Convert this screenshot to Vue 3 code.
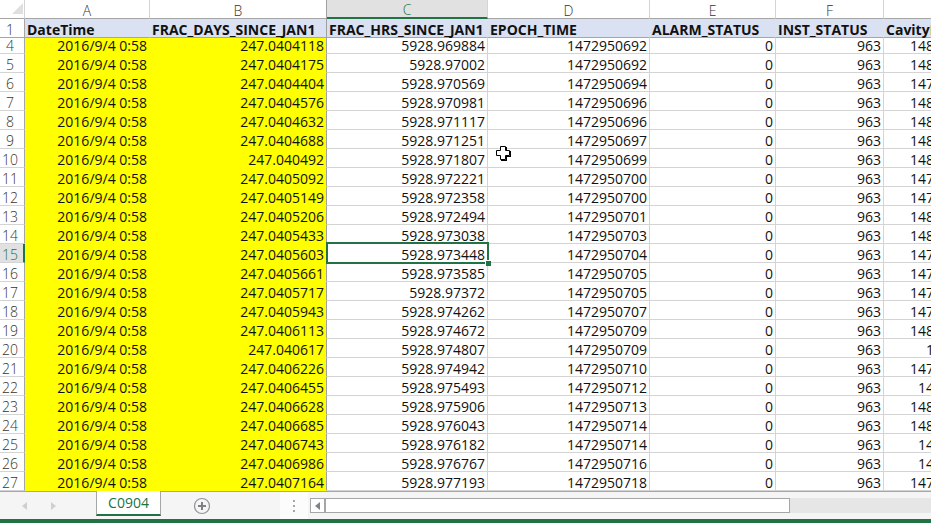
<template>
  <div class="workbook">
    <table class="grid">
      <colgroup>
        <col class="col-index" />
        <col v-for="column in columns" :key="column.letter" :class="'col-' + column.letter.toLowerCase()" />
      </colgroup>
      <thead>
        <tr class="letters">
          <th class="corner">
            <svg width="12" height="12" viewBox="0 0 12 12">
              <path d="M11 0V11H0Z" fill="#dfdfdf" />
            </svg>
          </th>
          <th
            v-for="column in columns"
            :key="column.letter"
            scope="col"
            :class="{ selected: column.letter === active.letter, frozen: column.letter === 'B' }"
          >
            {{ column.letter }}
          </th>
        </tr>
        <tr class="titles">
          <th class="index" scope="row">1</th>
          <th
            v-for="column in columns"
            :key="column.letter"
            scope="col"
            :class="{ frozen: column.letter === 'B' }"
          >
            {{ column.title }}
          </th>
        </tr>
      </thead>
      <tbody>
        <tr v-for="row in rows" :key="row.index" :class="{ first: row.index === 4 }">
          <th class="index" scope="row" :class="{ selected: row.index === active.row }">{{ row.index }}</th>
          <td
            v-for="(value, i) in row.cells"
            :key="i"
            :class="{ marked: i < 2, frozen: i === 1, active: isActive(row.index, i) }"
          >
            {{ value }}<span v-if="isActive(row.index, i)" class="handle"></span>
          </td>
        </tr>
      </tbody>
    </table>

    <div class="sheet-bar">
      <div class="sheets">
        <div class="sheet-nav">
          <button type="button" aria-label="Previous sheet">
            <svg width="5" height="8" viewBox="0 0 5 8"><path d="M5 0V8L0 4Z" fill="#cfcfcf" /></svg>
          </button>
          <button type="button" aria-label="Next sheet">
            <svg width="5" height="8" viewBox="0 0 5 8"><path d="M0 0V8L5 4Z" fill="#cfcfcf" /></svg>
          </button>
        </div>
        <button type="button" class="tab">C0904</button>
        <button type="button" class="new-sheet" aria-label="New sheet">
          <svg width="18" height="18" viewBox="0 0 18 18">
            <circle cx="9" cy="9" r="7.5" fill="none" stroke="#8f9498" stroke-width="1.2" />
            <path d="M9 5V13M5 9H13" stroke="#7c8285" stroke-width="2" />
          </svg>
        </button>
        <span class="dots"><i></i><i></i><i></i></span>
      </div>
      <div class="scrollbar">
        <button type="button" class="arrow" aria-label="Scroll left">
          <svg width="5" height="8" viewBox="0 0 5 8"><path d="M5 0V8L0 4Z" fill="#7d858c" /></svg>
        </button>
        <div class="track">
          <div class="thumb"></div>
        </div>
      </div>
    </div>
    <div class="status"></div>

    <svg class="pointer" width="17" height="17" viewBox="0 0 17 17">
      <path d="M11 2H12V6H16V12H12V16H6V15H11V11H15V6H11Z" fill="#000" />
      <path d="M5.500 1.500H10.500V5.500H14.500V10.500H10.500V14.500H5.500V10.500H1.500V5.500H5.500Z" fill="#fff" stroke="#000" stroke-width="1" />
    </svg>
  </div>
</template>

<script setup>
const columns = [
  { letter: 'A', title: 'DateTime' },
  { letter: 'B', title: 'FRAC_DAYS_SINCE_JAN1' },
  { letter: 'C', title: 'FRAC_HRS_SINCE_JAN1' },
  { letter: 'D', title: 'EPOCH_TIME' },
  { letter: 'E', title: 'ALARM_STATUS' },
  { letter: 'F', title: 'INST_STATUS' },
  { letter: 'G', title: 'CavityPressure' }
];

const active = { letter: 'C', row: 15 };

const readings = [
  ['247.0404118', '5928.969884', '1472950692', '148'],
  ['247.0404175', '5928.97002', '1472950692', '148'],
  ['247.0404404', '5928.970569', '1472950694', '147'],
  ['247.0404576', '5928.970981', '1472950696', '148'],
  ['247.0404632', '5928.971117', '1472950696', '148'],
  ['247.0404688', '5928.971251', '1472950697', '148'],
  ['247.040492', '5928.971807', '1472950699', '148'],
  ['247.0405092', '5928.972221', '1472950700', '147'],
  ['247.0405149', '5928.972358', '1472950700', '147'],
  ['247.0405206', '5928.972494', '1472950701', '148'],
  ['247.0405433', '5928.973038', '1472950703', '148'],
  ['247.0405603', '5928.973448', '1472950704', '147'],
  ['247.0405661', '5928.973585', '1472950705', '147'],
  ['247.0405717', '5928.97372', '1472950705', '147'],
  ['247.0405943', '5928.974262', '1472950707', '147'],
  ['247.0406113', '5928.974672', '1472950709', '148'],
  ['247.040617', '5928.974807', '1472950709', '1'],
  ['247.0406226', '5928.974942', '1472950710', '147'],
  ['247.0406455', '5928.975493', '1472950712', '14'],
  ['247.0406628', '5928.975906', '1472950713', '148'],
  ['247.0406685', '5928.976043', '1472950714', '148'],
  ['247.0406743', '5928.976182', '1472950714', '14'],
  ['247.0406986', '5928.976767', '1472950716', '14'],
  ['247.0407164', '5928.977193', '1472950718', '147']
];

const rows = readings.map(([days, hours, epoch, pressure], i) => ({
  index: i + 4,
  cells: ['2016/9/4 0:58', days, hours, epoch, '0', '963', pressure]
}));

const isActive = (index, i) => index === active.row && columns[i].letter === active.letter;
</script>

<style>
body {
  background: #f5f5f5;
}
</style>

<style scoped>
.workbook {
  position: relative;
  overflow: hidden;
  font-family: "Open Sans", "Noto Sans", sans-serif;
  font-size: 14px;
  font-weight: 400;
  color: #111;
}

/* the last column runs past the window edge */
.grid {
  width: calc(100% + 86px);
  table-layout: fixed;
  border-collapse: separate;
  border-spacing: 0;
  background: #fff;
}

.col-index {
  width: 25px;
}

.col-a {
  width: 125px;
}

.col-b {
  width: 177px;
}

.col-c {
  width: 161px;
}

.col-d {
  width: 162px;
}

.col-e {
  width: 126px;
}

.col-f {
  width: 108px;
}

.grid th,
.grid td {
  box-sizing: border-box;
  height: 19px;
  padding: 0 2px;
  border-right: 1px solid #d4d4d4;
  border-bottom: 1px solid #d4d4d4;
  line-height: 15px;
  white-space: nowrap;
  vertical-align: bottom;
}

.grid td {
  text-align: right;
}

.grid td:last-child {
  padding-right: 82px;
}

.grid .letters th {
  padding: 0;
  border-bottom-color: #a6a6a6;
  font-weight: 300;
  color: #333;
  text-align: center;
}

.grid .letters .corner {
  line-height: 0;
  text-align: right;
  vertical-align: middle;
}

.grid .letters .selected {
  border-bottom: 2px solid #217346;
  background: #e1e1e1;
  color: #217346;
}

.grid .titles th {
  border-right-color: #d9e1f2;
  border-bottom-color: #a6a6a6;
  background: #d9e1f2;
  font-weight: 700;
  text-align: left;
}

.grid .index,
.grid .titles .index {
  padding: 0 4px 0 0;
  border-right-color: #a6a6a6;
  background: #fff;
  font-weight: 300;
  color: #333;
  text-align: center;
}

.grid .index.selected {
  padding-right: 3px;
  border-right: 2px solid #217346;
  background: #e1e1e1;
  color: #217346;
}

/* scrolled half under the frozen title row */
.grid .first th,
.grid .first td {
  height: 16px;
}

.grid .marked {
  border-color: #ff0;
  background: #ff0;
}

.grid .frozen,
.grid .titles .frozen {
  border-right-color: #a0a0a0;
}

.active {
  position: relative;
}

.active::after {
  content: "";
  position: absolute;
  inset: -2px -2px -2px -1px;
  border: 2px solid #217346;
}

.handle {
  position: absolute;
  right: -4px;
  bottom: -4px;
  z-index: 1;
  width: 5px;
  height: 5px;
  border: solid #fff;
  border-width: 1px 0 0 1px;
  background: #217346;
}

.sheet-bar {
  display: flex;
  height: 28px;
  box-sizing: border-box;
  border-top: 1px solid #a6a6a6;
  background: #f5f5f5;
}

.sheets {
  display: flex;
  flex: 0 0 308px;
  align-items: center;
}

.sheet-bar button {
  padding: 0;
  border: 0;
  background: none;
  font: inherit;
  line-height: 0;
}

.sheet-nav {
  display: flex;
  flex: 0 0 96px;
  justify-content: center;
  gap: 24px;
  box-sizing: border-box;
  padding-right: 18px;
}

.sheet-bar .tab {
  align-self: flex-start;
  width: 65px;
  height: 25px;
  margin-top: -1px;
  border: solid #a6a6a6;
  border-width: 0 1px;
  border-bottom: 2px solid #217346;
  background: #fff;
  line-height: 22px;
  color: #217346;
}

.new-sheet {
  margin-left: 32px;
}

.dots {
  display: flex;
  flex-direction: column;
  align-items: center;
  justify-content: center;
  gap: 3px;
  width: 28px;
  height: 100%;
  margin-left: auto;
  background: #fcfcfc;
}

.dots i {
  width: 2px;
  height: 2px;
  background: #a6a6a6;
}

.scrollbar {
  display: flex;
  flex: 1;
  height: 15px;
  margin: 6px 0 0 2px;
}

.sheet-bar .arrow {
  box-sizing: border-box;
  width: 15px;
  border: 1px solid #a6a6a6;
  background: #fff;
}

.track {
  display: grid;
  flex: 1;
  grid-template-columns: 465fr 141fr;
  background: #e6e6e6;
}

.thumb {
  border: 1px solid #a6a6a6;
  background: #fff;
}

.status {
  height: 4px;
  background: #217346;
}

.pointer {
  position: absolute;
  top: 145px;
  left: 495px;
}
</style>
